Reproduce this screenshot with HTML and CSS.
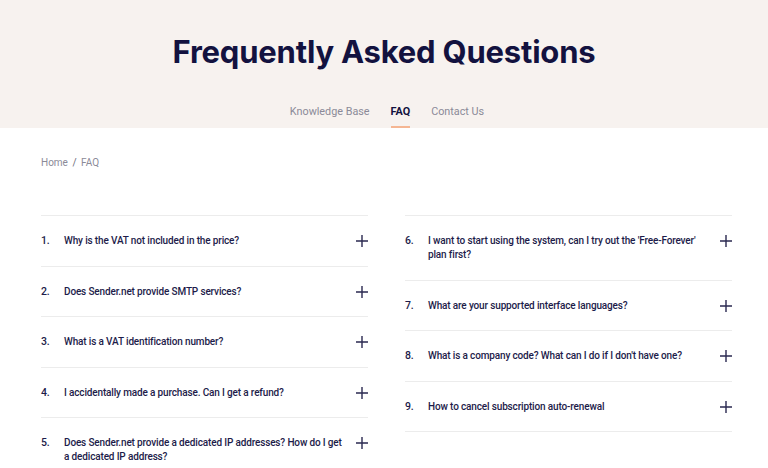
FILE: index.html
```html
<!DOCTYPE html>
<html lang="en">
<head>
<meta charset="utf-8">
<title>FAQ</title>
<link rel="stylesheet" href="styles.css">
</head>
<body>
<header class="hero">
  <h1 class="title">Frequently Asked Questions</h1>
  <nav class="tabs">
    <a class="tab">Knowledge Base</a>
    <a class="tab active">FAQ</a>
    <a class="tab">Contact Us</a>
  </nav>
</header>
<main class="content">
  <div class="crumbs">Home <span class="sep">/</span> FAQ</div>
  <div class="grid">
    <ul class="list">
      <li class="item"><span class="num">1.</span><span class="q">Why is the VAT not included in the price?</span><svg class="plus" viewBox="0 0 12 12"><path d="M0 6H12M6 0V12"/></svg></li>
      <li class="item"><span class="num">2.</span><span class="q">Does Sender.net provide SMTP services?</span><svg class="plus" viewBox="0 0 12 12"><path d="M0 6H12M6 0V12"/></svg></li>
      <li class="item"><span class="num">3.</span><span class="q">What is a VAT identification number?</span><svg class="plus" viewBox="0 0 12 12"><path d="M0 6H12M6 0V12"/></svg></li>
      <li class="item"><span class="num">4.</span><span class="q">I accidentally made a purchase. Can I get a refund?</span><svg class="plus" viewBox="0 0 12 12"><path d="M0 6H12M6 0V12"/></svg></li>
      <li class="item"><span class="num">5.</span><span class="q">Does Sender.net provide a dedicated IP addresses? How do I get a dedicated IP address?</span><svg class="plus" viewBox="0 0 12 12"><path d="M0 6H12M6 0V12"/></svg></li>
    </ul>
    <ul class="list">
      <li class="item"><span class="num">6.</span><span class="q">I want to start using the system, can I try out the <span class="nowrap">'Free-Forever'</span> plan first?</span><svg class="plus" viewBox="0 0 12 12"><path d="M0 6H12M6 0V12"/></svg></li>
      <li class="item"><span class="num">7.</span><span class="q">What are your supported interface languages?</span><svg class="plus" viewBox="0 0 12 12"><path d="M0 6H12M6 0V12"/></svg></li>
      <li class="item"><span class="num">8.</span><span class="q">What is a company code? What can I do if I don't have one?</span><svg class="plus" viewBox="0 0 12 12"><path d="M0 6H12M6 0V12"/></svg></li>
      <li class="item"><span class="num">9.</span><span class="q">How to cancel subscription auto-renewal</span><svg class="plus" viewBox="0 0 12 12"><path d="M0 6H12M6 0V12"/></svg></li>
    </ul>
  </div>
</main>
</body>
</html>
```
FILE: styles.css
```css
* { box-sizing: border-box; }
html, body { margin: 0; padding: 0; }
body {
  font-family: Roboto, "Noto Sans", sans-serif;
  background: #ffffff;
  color: #1b1a47;
  width: 768px;
  overflow: hidden;
}
.hero {
  background: #f7f2ef;
  height: 128px;
  display: flex;
  flex-direction: column;
  align-items: center;
  padding-top: 32px;
}
.title {
  margin: 0;
  font-family: Inter, sans-serif;
  font-size: 31px;
  line-height: 40px;
  font-weight: 700;
  color: #13123f;
  letter-spacing: -0.2px;
}
.tabs {
  margin-top: auto;
  margin-left: 6px;
  display: flex;
  gap: 21px;
}
.tab {
  font-size: 10.8px;
  line-height: 14px;
  color: #8b8a98;
  padding-bottom: 7px;
  border-bottom: 2px solid transparent;
}
.tab.active {
  color: #13123f;
  font-weight: 700;
  border-bottom-color: #f5b693;
}
.content {
  padding: 0 36px 0 41px;
}
.crumbs {
  margin-top: 28px;
  font-size: 10px;
  line-height: 13px;
  color: #8b8a98;
}
.sep { margin: 0 2px; color: #6b6a78; }
.grid {
  margin-top: 46px;
  display: grid;
  grid-template-columns: 327px 327px;
  column-gap: 37px;
}
.list {
  list-style: none;
  margin: 0;
  padding: 0;
  border-top: 1px solid #ececec;
}
.item {
  display: flex;
  align-items: flex-start;
  padding: 18px 0 17.6px;
  border-bottom: 1px solid #ececec;
  font-size: 10px;
  line-height: 14px;
  font-weight: 500;
  letter-spacing: -0.15px;
  color: #1d1c4a;
}
.num { width: 23px; flex: none; font-size: 10.5px; }
.q { flex: 1; padding-right: 12px; }
.nowrap { white-space: nowrap; }
.plus {
  flex: none;
  width: 12px;
  height: 12px;
  margin-top: 1px;
  fill: none;
  stroke: #2a2950;
  stroke-width: 1.4;
}
```
